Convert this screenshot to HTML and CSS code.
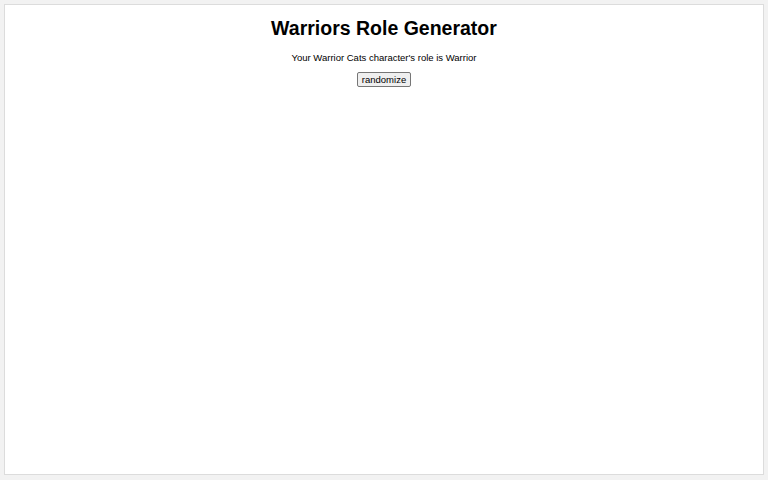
FILE: index.html
```html
<!DOCTYPE html>
<html lang="en">
  <head>
    <meta charset="UTF-8" />
    <meta name="viewport" content="width=device-width, initial-scale=1.0" />
    <title>Warriors Role Generator</title>
    <link rel="stylesheet" href="styles.css">
  </head>
  <body>
    <div class="container">
      <h1>Warriors Role Generator</h1>
      <p id="roleText">Your Warrior Cats character's role is Warrior</p>
      <button class="button" onclick="randomize()">randomize</button>
    </div>

    <script>
      const roles = ["Warrior", "Apprentice", "Medicine Cat", "Deputy", "Leader", "Queen", "Elder", "Kit"];

      function randomize() {
        const role = roles[Math.floor(Math.random() * roles.length)];
        document.getElementById("roleText").innerText =
          "Your Warrior Cats character's role is " + role;
      }
    </script>
  </body>
</html>
```

FILE: styles.css
```css
* {
  box-sizing: border-box;
  margin: 0;
  padding: 0;
  font-family: "Liberation Sans", Arial, sans-serif;
}
body {
  background: #f2f2f2;
  padding: 4px;
  height: 480px;
}
.container {
  height: 471px;
  width: 760px;
  background: #fff;
  border: 1px solid #dcdcdc;
  text-align: center;
  padding-top: 12px;
}
h1 {
  font-size: 19.5px;
  line-height: 22px;
  color: #000;
  margin-bottom: 13px;
}
p {
  font-size: 9.5px;
  line-height: 11px;
  color: #000;
  margin-bottom: 6px;
}
.button {
  font-size: 9.5px;
  line-height: 11px;
  padding: 1px 4px;
  background: #efefef;
  border: 1px solid #767676;
  border-radius: 2px;
  cursor: pointer;
}
```
